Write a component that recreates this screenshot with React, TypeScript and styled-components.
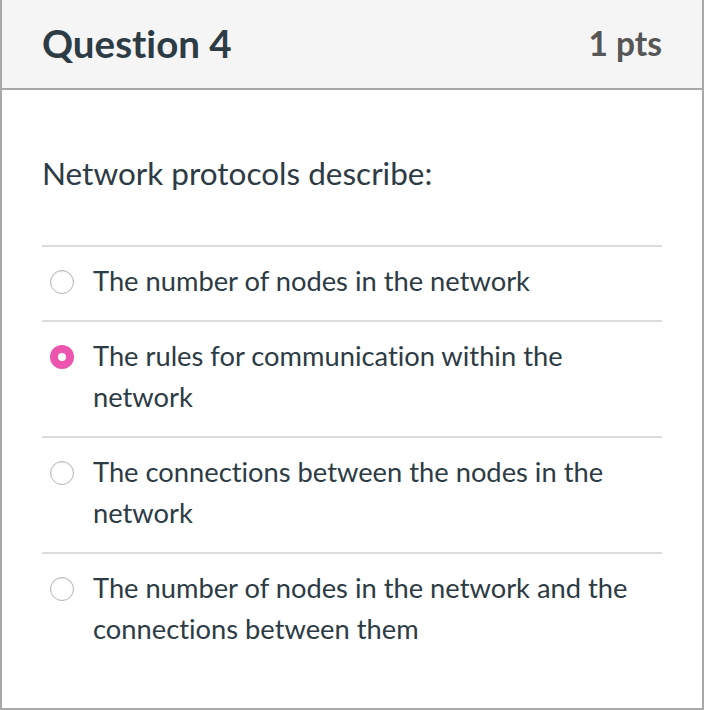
import React from "react";
import styled, { createGlobalStyle } from "styled-components";

const Global = createGlobalStyle`
  html, body { margin: 0; padding: 0; background: #ffffff; }
  body {
    font-family: Lato, "Open Sans", sans-serif;
    font-variant-ligatures: none;
  }
`;

const Card = styled.div`
  width: 704px;
  height: 710px;
  box-sizing: border-box;
  border: 2px solid #a8a8a8;
  border-top: none;
  background: #fff;
  display: flex;
  flex-direction: column;
`;

const Header = styled.div`
  height: 90px;
  box-sizing: border-box;
  background: #f5f5f5;
  border-bottom: 2px solid #a8a8a8;
  display: flex;
  align-items: center;
  justify-content: space-between;
  padding: 0 40px 2px 40px;
  flex: none;
`;

const Title = styled.h2`
  margin: 0;
  font-family: Lato, sans-serif;
  font-weight: 700;
  font-size: 38.5px;
  line-height: 44px;
  color: #2d3b45;
`;

const Points = styled.div`
  font-family: Lato, sans-serif;
  font-weight: 700;
  font-size: 33.5px;
  line-height: 40px;
  color: #565656;
`;

const Body = styled.div`
  padding: 60px 40px 0 40px;
`;

const Prompt = styled.p`
  margin: 0 0 49px 0;
  font-size: 31.5px;
  line-height: 46px;
  color: #2d3b45;
`;

const Answers = styled.div`
  display: flex;
  flex-direction: column;
`;

const Row = styled.label`
  display: flex;
  align-items: flex-start;
  border-top: 2px solid #dcdcdc;
  padding: 13px 0 19px 0;
`;

const Radio = styled.span<{ $checked?: boolean }>`
  flex: none;
  box-sizing: border-box;
  width: 24px;
  height: 24px;
  margin: 10px 19px 0 8px;
  border-radius: 50%;
  display: flex;
  align-items: center;
  justify-content: center;
  ${(p) =>
    p.$checked
      ? `background: #eb55ad; border: none;`
      : `background: #fff; border: 1.5px solid #b4b4b4; box-shadow: inset 0 1px 2px rgba(0,0,0,0.08);`}
`;

const Dot = styled.span`
  width: 8px;
  height: 8px;
  border-radius: 50%;
  background: #fff;
`;

const AnswerText = styled.span`
  font-size: 27.3px;
  line-height: 41px;
  color: #2d3b45;
`;

const answers = [
  { text: "The number of nodes in the network", checked: false },
  { text: "The rules for communication within the network", checked: true },
  { text: "The connections between the nodes in the network", checked: false },
  {
    text: "The number of nodes in the network and the connections between them",
    checked: false,
  },
];

export default function App() {
  return (
    <>
      <Global />
      <Card>
        <Header>
          <Title>Question 4</Title>
          <Points>1 pts</Points>
        </Header>
        <Body>
          <Prompt>Network protocols describe:</Prompt>
          <Answers>
            {answers.map((a, i) => (
              <Row key={i}>
                <Radio $checked={a.checked}>{a.checked && <Dot />}</Radio>
                <AnswerText>{a.text}</AnswerText>
              </Row>
            ))}
          </Answers>
        </Body>
      </Card>
    </>
  );
}
